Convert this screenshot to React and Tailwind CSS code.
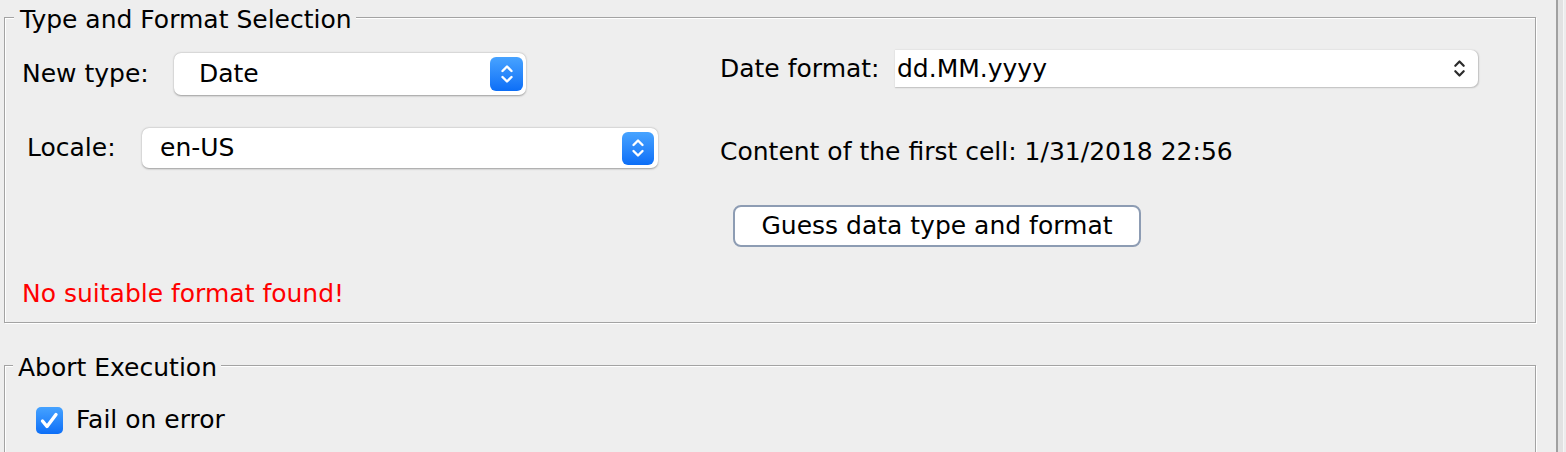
import React from "react";

// up/down chevrons used in the combo boxes
const Chevrons = ({ color = "#fff", size = 14 }) => (
  <svg width={size} height={size + 8} viewBox="0 0 14 22" fill="none">
    <path d="M2.5 8 L7 3.5 L11.5 8" stroke={color} strokeWidth="2.4" strokeLinecap="round" strokeLinejoin="round" />
    <path d="M2.5 14 L7 18.5 L11.5 14" stroke={color} strokeWidth="2.4" strokeLinecap="round" strokeLinejoin="round" />
  </svg>
);

const BlueArrows = ({ className = "" }) => (
  <div className={`flex items-center justify-center rounded-[6px] bg-gradient-to-b from-[#47a3ff] to-[#0b6ef7] ${className}`}>
    <Chevrons />
  </div>
);

const Combo = ({ value, className = "", textPad = "pl-[25px]" }) => (
  <div className={`flex items-center justify-between rounded-[7px] bg-white shadow-[0_0.5px_2px_rgba(0,0,0,0.35)] ${className}`}>
    <span className={textPad}>{value}</span>
    <BlueArrows className="mr-[3px] h-[34px] w-[33px]" />
  </div>
);

// Swing style etched border box with a title sitting on its top edge
const Group = ({ title, titleClass, className = "", children }) => (
  <div className={`relative border border-[#a3a3a3] shadow-[inset_1px_1px_0_#fff,1px_1px_0_#fff] ${className}`}>
    <div className={`absolute -top-[8px] bg-[#eeeeee] leading-[20px] ${titleClass}`}>{title}</div>
    {children}
  </div>
);

export default function App() {
  return (
    <div className="flex h-[452px] w-[1566px] overflow-hidden bg-[#eeeeee] font-['DejaVu_Sans',sans-serif] text-[25px] text-black">
      <div className="w-[1556px] pl-[4px] pt-[17px]">
        <Group
          title="Type and Format Selection"
          titleClass="left-[9px] pl-[6px] pr-[4px]"
          className="h-[306px] w-[1532px]"
        >
          <div className="flex">
            {/* left column */}
            <div className="w-[715px] pl-[17px]">
              <div className="mt-[35px] flex h-[42px] items-center">
                <span className="w-[152px]">New type:</span>
                <Combo value="Date" className="h-[42px] w-[352px]" />
              </div>
              <div className="mt-[33px] flex h-[40px] items-center">
                <span className="w-[120px] pl-[5px]">Locale:</span>
                <div className="flex h-[40px] w-[516px] items-center justify-between rounded-[7px] bg-white shadow-[0_0.5px_2px_rgba(0,0,0,0.35)]">
                  <span className="pl-[18px]">en-US</span>
                  <BlueArrows className="mr-[4px] h-[33px] w-[32px]" />
                </div>
              </div>
              <div className="mt-[112px] leading-[28px] text-[#ff0000]">No suitable format found!</div>
            </div>

            {/* right column */}
            <div className="flex-1">
              <div className="mt-[32px] flex h-[37px] items-center">
                <span className="w-[175px]">Date format:</span>
                <div className="flex h-[37px] w-[583px] items-center justify-between rounded-r-[7px] bg-white shadow-[0.5px_0.5px_1.5px_rgba(0,0,0,0.2)]">
                  <span className="pl-[2px]">dd.MM.yyyy</span>
                  <span className="mr-[12px] flex">
                    <Chevrons color="#2b2b2b" size={13} />
                  </span>
                </div>
              </div>
              <div className="mt-[51px] leading-[28px]">Content of the first cell: 1/31/2018 22:56</div>
              <button className="ml-[13px] mt-[39px] flex h-[42px] w-[408px] items-center justify-center rounded-[8px] border-2 border-[#8d9cb3] bg-white">
                Guess data type and format
              </button>
            </div>
          </div>
        </Group>

        <Group
          title="Abort Execution"
          titleClass="left-[8px] pl-[5px] pr-[4px]"
          className="mt-[42px] h-[200px] w-[1532px]"
        >
          <div className="mt-[40px] flex items-center pl-[31px]">
            <span className="flex h-[27px] w-[27px] items-center justify-center rounded-[5px] bg-gradient-to-b from-[#45a2ff] to-[#0b6ef7]">
              <svg width="27" height="27" viewBox="0 0 27 27" fill="none">
                <path d="M6.5 14 L11 19.5 L20 7.5" stroke="#fff" strokeWidth="3.4" strokeLinecap="round" strokeLinejoin="round" />
              </svg>
            </span>
            <span className="ml-[13px] leading-[28px]">Fail on error</span>
          </div>
        </Group>
      </div>

      {/* scrollbar edge on the right */}
      <div className="flex h-full w-[10px] border-l-2 border-[#a0a0a0]">
        <div className="w-[5px] bg-[#e2e2e2]" />
        <div className="w-[1px] bg-[#f6f6f6]" />
        <div className="flex-1 bg-[#ececec]" />
      </div>
    </div>
  );
}
